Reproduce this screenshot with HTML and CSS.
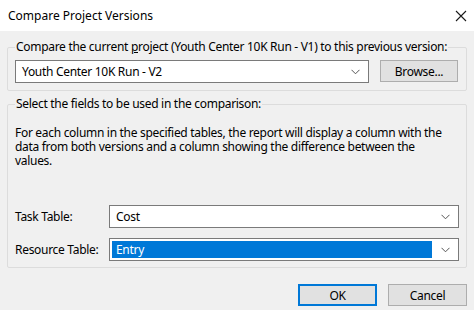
FILE: index.html
```html
<!DOCTYPE html>
<html lang="en">

<head>
    <meta charset="UTF-8">
    <title>Compare Project Versions</title>
    <link rel="stylesheet" href="styles.css">
</head>

<body>
    <div class="titlebar">
        <span class="title">Compare Project Versions</span>
        <svg class="close-icon" width="12" height="12" viewBox="0 0 12 12" fill="none" stroke="#1a1a1a" stroke-width="1.1">
            <path d="M1 1L11 11M11 1L1 11" />
        </svg>
    </div>

    <div class="dialog-body">
        <fieldset class="group group-version">
            <legend>Compare the current <u>p</u>roject (Youth Center 10K Run - V1) to this previous version:</legend>
            <div class="version-row">
                <div class="combo combo-version">
                    <span class="combo-text">Youth Center 10K Run - V2</span>
                    <svg class="chevron" width="9" height="6" viewBox="0 0 9 6" fill="none" stroke="#555" stroke-width="1">
                        <path d="M0.5 0.8L4.5 4.8L8.5 0.8" />
                    </svg>
                </div>
                <button class="btn">Browse...</button>
            </div>
        </fieldset>

        <fieldset class="group group-fields">
            <legend>Select the fields to be used in the comparison:</legend>
            <p class="note">For each column in the specified tables, the report will display a column with the<br>data from both versions and a column showing the difference between the<br>values.</p>

            <div class="field-rows">
                <div class="field-row">
                    <label class="field-label">Task Table:</label>
                    <div class="combo">
                        <span class="combo-text">Cost</span>
                        <svg class="chevron" width="9" height="6" viewBox="0 0 9 6" fill="none" stroke="#555" stroke-width="1">
                            <path d="M0.5 0.8L4.5 4.8L8.5 0.8" />
                        </svg>
                    </div>
                </div>
                <div class="field-row">
                    <label class="field-label">Resource Table:</label>
                    <div class="combo">
                        <span class="combo-text selected">Entry</span>
                        <svg class="chevron" width="9" height="6" viewBox="0 0 9 6" fill="none" stroke="#555" stroke-width="1">
                            <path d="M0.5 0.8L4.5 4.8L8.5 0.8" />
                        </svg>
                    </div>
                </div>
            </div>
        </fieldset>

        <div class="actions">
            <button class="btn btn-default">OK</button>
            <button class="btn">Cancel</button>
        </div>
    </div>
</body>

</html>
```

FILE: styles.css
```css
:root {
    --dialog-bg: #f0f0f0;
    --group-border: #dcdcdc;
    --field-border: #7a7a7a;
    --btn-bg: #e1e1e1;
    --btn-border: #adadad;
    --accent: #0078d7;
    --text: #000000;
}

* {
    margin: 0;
    padding: 0;
    box-sizing: border-box;
    font-family: "Noto Sans", "Open Sans", sans-serif;
}

body {
    background: var(--dialog-bg);
    color: var(--text);
    font-size: 12px;
    width: 474px;
    height: 310px;
    overflow: hidden;
}

.titlebar {
    height: 31px;
    background: #ffffff;
    display: flex;
    align-items: center;
    justify-content: space-between;
    padding: 0 7px 0 8px;
}

.title {
    font-size: 12px;
}

.close-icon {
    margin-top: 1px;
}

.dialog-body {
    padding: 8px 7px 0 7px;
    letter-spacing: -0.3px;
}

.group {
    border: 1px solid var(--group-border);
    border-radius: 2px;
}

.group legend {
    padding: 0 1px;
    line-height: 16px;
}

.group-version {
    padding: 5px 8px 7px 7px;
}

.version-row {
    display: flex;
    gap: 11px;
}

.combo {
    flex: 1;
    height: 23px;
    background: #ffffff;
    border: 1px solid var(--field-border);
    display: flex;
    align-items: center;
    justify-content: space-between;
    padding: 0 8px 0 2px;
}

.combo-text {
    padding: 0 4px;
    line-height: 17px;
}

.combo-text.selected {
    background: var(--accent);
    color: #ffffff;
    flex: 1;
    margin-right: 9px;
}

.btn {
    width: 78px;
    height: 22px;
    background: var(--btn-bg);
    border: 1px solid var(--btn-border);
    font-size: 12px;
    letter-spacing: -0.3px;
    color: var(--text);
}

.btn-default {
    border: 2px solid var(--accent);
}

.group-fields {
    margin-top: 5px;
    padding: 0 7px 6px 7px;
}

.note {
    margin-top: 14px;
    line-height: 14px;
}

.field-rows {
    margin-top: 37px;
    display: flex;
    flex-direction: column;
    gap: 10px;
}

.field-row {
    display: flex;
    align-items: center;
}

.field-label {
    width: 94px;
}

.actions {
    margin-top: 16px;
    display: flex;
    justify-content: flex-end;
    gap: 11px;
}

.actions .btn {
    width: 79px;
}
```
